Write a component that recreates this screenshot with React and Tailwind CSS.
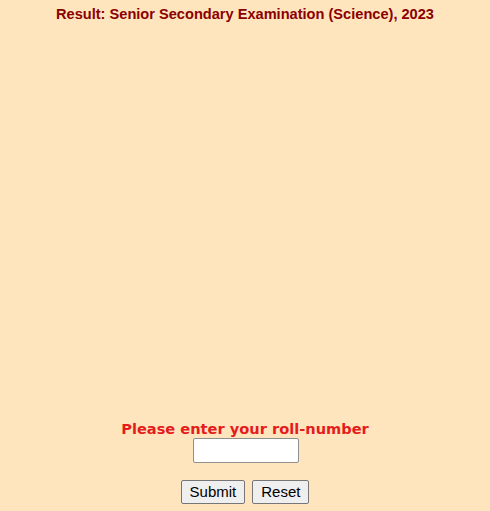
export default function App() {
    return (
        <div className="bg-[#ffe5bd] min-h-[511px] w-full flex flex-col items-center font-['Liberation_Sans',Arial,sans-serif]">
            {/* header */}
            <h1 className="mt-[6px] text-[14.6px] leading-[16px] font-bold text-[#8b0000] text-center">
                Result: Senior Secondary Examination (Science), 2023
            </h1>

            {/* empty area */}
            <div className="h-[398px]" />

            {/* roll number form */}
            <form className="flex flex-col items-center" onSubmit={(e) => e.preventDefault()}>
                <p className="text-[14.6px] leading-[18px] font-bold text-[#e51c1c] font-['DejaVu_Sans',Verdana,sans-serif]">
                    Please enter your roll-number
                </p>
                <input
                    type="text"
                    className="ml-[2px] w-[106px] h-[25px] bg-white border border-[#8f8f8f] rounded-[2px] px-1 text-[13px] outline-none"
                />
                <div className="mt-[17px] flex gap-[7px]">
                    <button type="submit" className="h-[24px] px-[8px] text-[15px] leading-[18px] text-black bg-[#efefef] border border-[#767676] rounded-[2px]">
                        Submit
                    </button>
                    <button type="reset" className="h-[24px] px-[8px] text-[15px] leading-[18px] text-black bg-[#efefef] border border-[#767676] rounded-[2px]">
                        Reset
                    </button>
                </div>
            </form>
        </div>
    );
}
